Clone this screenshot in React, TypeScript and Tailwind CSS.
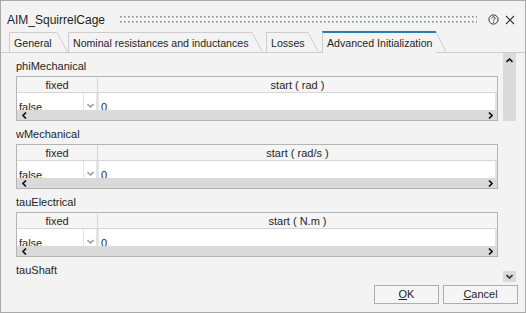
import React from 'react';

type Dir = 'left' | 'right' | 'up' | 'down';

const chevronPoints: Record<Dir, string> = {
  left: '4,0.5 1,3.5 4,6.5',
  right: '1,0.5 4,3.5 1,6.5',
  up: '0.5,4 3.5,1 6.5,4',
  down: '0.5,1 3.5,4 6.5,1',
};

const Chevron = ({ dir, color = '#111' }: { dir: Dir; color?: string }) => {
  const wide = dir === 'up' || dir === 'down';
  return (
    <svg width={wide ? 7 : 5} height={wide ? 5 : 7} viewBox={wide ? '0 0 7 5' : '0 0 5 7'} className="block">
      <polyline points={chevronPoints[dir]} fill="none" stroke={color} strokeWidth="1.6" />
    </svg>
  );
};

const Tab = ({ label, width, active = false, gap = 0 }: { label: string; width: number; active?: boolean; gap?: number }) => (
  <div className={`flex ${active ? 'h-[22px]' : 'h-[20px]'}`} style={{ width, marginLeft: gap }}>
    <div
      className={`flex-1 min-w-0 whitespace-nowrap border-l border-[#cdcdcd] pl-[4px] leading-[14px] text-[10.6px] ${
        active ? 'border-t-2 border-t-[#2c7cb4] pt-[3px] bg-[#f3f3f3]' : 'border-t pt-[3px]'
      }`}
    >
      {label}
    </div>
    <svg width="11" height={active ? 22 : 20} className="block shrink-0">
      <line x1="0" y1={active ? 1 : 0.5} x2="10.5" y2={active ? 22 : 20} stroke="#cdcdcd" strokeWidth="1" />
    </svg>
  </div>
);

const InitTable = ({ unit }: { unit: string }) => (
  <div className="border border-[#b4b4b4] flex flex-col">
    <div className="flex h-[16px] border-b border-[#d6d6d6] leading-[16px] bg-[#f5f5f5]">
      <div className="w-[81px] text-center border-r border-[#d6d6d6]">fixed</div>
      <div className="flex-1 text-center">start ( {unit} )</div>
    </div>
    <div className="flex h-[17px] bg-[#e4e4e4] overflow-hidden">
      <div className="w-[66px] bg-white pl-[2px] pt-[7px] leading-[14px]">false</div>
      <div className="w-[12px] ml-px bg-white flex justify-center pt-[10px]">
        <Chevron dir="down" color="#a0a0a0" />
      </div>
      <div className="flex-1 ml-[3px] mr-[2px] bg-white pl-[2px] pt-[7px] leading-[14px]">0</div>
    </div>
    <div className="h-[10px] bg-[#dadada] flex items-center justify-between pl-[5px] pr-[4px]">
      <Chevron dir="left" />
      <Chevron dir="right" />
    </div>
  </div>
);

const Section = ({ name, unit }: { name: string; unit: string }) => (
  <>
    <div className="h-[23px] pt-[6px] leading-[14px]">{name}</div>
    <InitTable unit={unit} />
  </>
);

export default function App() {
  return (
    <div className="w-[526px] h-[313px] border border-[#a9a9a9] bg-[#f3f3f3] flex flex-col overflow-hidden text-[11px] text-[#1e1e1e] font-['Liberation_Sans',Arial,sans-serif]">
      {/* title bar */}
      <div className="h-[29px] flex items-center pt-[8px] pl-[6px] pr-[8px] shrink-0">
        <span className="text-[12px] leading-[14px]">AIM_SquirrelCage</span>
        <svg className="ml-[15px] block" width="357" height="8">
          <defs>
            <pattern id="grip" width="4" height="5" patternUnits="userSpaceOnUse">
              <rect x="0" y="0" width="1.6" height="1.6" fill="#8c8c8c" />
            </pattern>
          </defs>
          <rect width="357" height="7" fill="url(#grip)" />
        </svg>
        <svg className="ml-[11px] block" width="11" height="11" viewBox="0 0 11 11">
          <circle cx="5.5" cy="5.5" r="4.6" fill="none" stroke="#333" strokeWidth="1" />
          <path d="M3.8 4.3 C3.8 2.4 7.2 2.4 7.2 4.2 C7.2 5.4 5.5 5.4 5.5 6.6" fill="none" stroke="#333" strokeWidth="1" />
          <rect x="5" y="7.6" width="1.1" height="1.1" fill="#333" />
        </svg>
        <svg className="ml-[6px] block" width="10" height="10" viewBox="0 0 10 10">
          <path d="M1 1 L9 9 M9 1 L1 9" stroke="#333" strokeWidth="1.1" />
        </svg>
      </div>

      {/* tabs */}
      <div className="h-[23px] flex items-end pl-[8px] shrink-0 border-b border-[#cdcdcd]">
        <Tab label="General" width={59} />
        <Tab label="Nominal resistances and inductances" width={195} />
        <Tab label="Losses" width={53} gap={3} />
        <div className="-mb-px">
          <Tab label="Advanced Initialization" width={125} active gap={3} />
        </div>
      </div>

      {/* content */}
      <div className="h-[230px] flex shrink-0">
        <div className="w-[482px] ml-[15px] overflow-hidden flex flex-col">
          <Section name="phiMechanical" unit="rad" />
          <Section name="wMechanical" unit="rad/s" />
          <Section name="tauElectrical" unit="N.m" />
          <div className="h-[23px] pt-[6px] leading-[14px]">tauShaft</div>
        </div>
        <div className="w-[13px] ml-[5px] flex flex-col">
          <div className="h-[68px] bg-[#dadada] flex justify-center pt-[5px]">
            <Chevron dir="up" />
          </div>
          <div className="flex-1" />
          <div className="h-[11px] mb-[1px] bg-[#dadada] flex justify-center items-center">
            <Chevron dir="down" color="#333" />
          </div>
        </div>
      </div>

      {/* buttons */}
      <div className="flex justify-end gap-[4px] pt-[2px] pr-[7px]">
        <button className="w-[65px] h-[19px] border border-[#adadad] bg-[#f5f5f5] leading-[17px]">
          <span className="underline">O</span>K
        </button>
        <button className="w-[75px] h-[19px] border border-[#adadad] bg-[#f5f5f5] leading-[17px]">
          <span className="underline">C</span>ancel
        </button>
      </div>
    </div>
  );
}
